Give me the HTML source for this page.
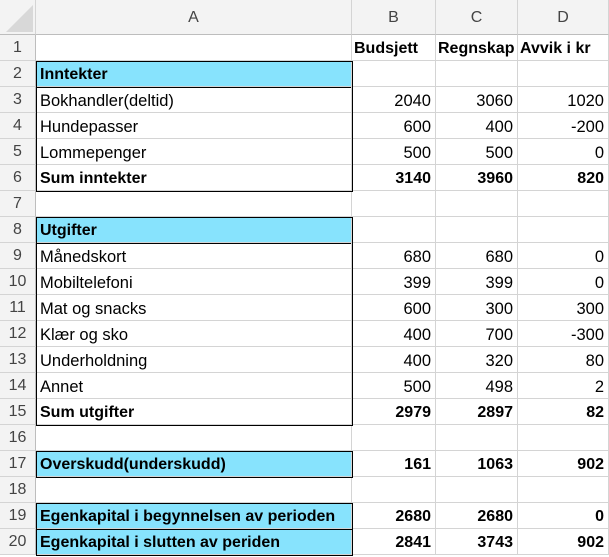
<!DOCTYPE html>
<html><head><meta charset="utf-8"><style>
*{box-sizing:border-box;margin:0;padding:0}
body{width:609px;height:557px;overflow:hidden;background:#fff;font-family:"Liberation Sans",Arial,sans-serif;font-size:16.5px;color:#000;position:relative}
.r{position:absolute;left:0;height:26px;display:flex;width:620px;z-index:1}
.r div{border-right:1px solid #d4d4d4;border-bottom:1px solid #d4d4d4;height:26px;line-height:28px;white-space:nowrap;overflow:hidden}
.r div.h{width:36px;background:#f3f3f3;text-align:center;color:#444;font-size:16px;line-height:26px;border-right:1px solid #bdbdbd}
.a{width:316px;padding-left:4px}
.b{width:84px;text-align:right;padding-right:4px}
.c{width:82px;text-align:right;padding-right:4px}
.d{width:91px;text-align:right;padding-right:4px}
.r div.bo{font-weight:bold;font-size:16px;line-height:28px}
.hd{position:absolute;top:0;left:0;height:35px;display:flex;width:620px;background:#f3f3f3}
.hd div{height:35px;line-height:35px;text-align:center;color:#444;font-size:16px;border-right:1px solid #d4d4d4;border-bottom:1px solid #bdbdbd}
.box{position:absolute;left:36px;width:317px;border:1px solid #000;z-index:2}
.blue{background:#87e3fd;z-index:0}
</style></head><body>
<div class="hd"><div style="width:36px;position:relative"><svg width="36" height="35" style="position:absolute;left:0;top:0"><polygon points="33,5 33,32 6,32" fill="#d8d8d8"/></svg></div><div style="width:316px">A</div><div style="width:84px">B</div><div style="width:82px">C</div><div style="width:91px">D</div></div>

<div class="r" style="top:35px"><div class="h">1</div><div class="a"></div><div class="b bo" style="text-align:left;padding-left:2px">Budsjett</div><div class="c bo" style="text-align:left;padding-left:2px">Regnskap</div><div class="d bo" style="text-align:left;padding-left:2px">Avvik i kr</div></div>
<div class="box blue" style="top:61px;height:27px"></div>
<div class="r" style="top:61px"><div class="h">2</div><div class="a bo">Inntekter</div><div class="b"></div><div class="c"></div><div class="d"></div></div>
<div class="r" style="top:87px"><div class="h">3</div><div class="a">Bokhandler(deltid)</div><div class="b">2040</div><div class="c">3060</div><div class="d">1020</div></div>
<div class="r" style="top:113px"><div class="h">4</div><div class="a">Hundepasser</div><div class="b">600</div><div class="c">400</div><div class="d">-200</div></div>
<div class="r" style="top:139px"><div class="h">5</div><div class="a">Lommepenger</div><div class="b">500</div><div class="c">500</div><div class="d">0</div></div>
<div class="r" style="top:165px"><div class="h">6</div><div class="a bo">Sum inntekter</div><div class="b bo">3140</div><div class="c bo">3960</div><div class="d bo">820</div></div>
<div class="r" style="top:191px"><div class="h">7</div><div class="a"></div><div class="b"></div><div class="c"></div><div class="d"></div></div>
<div class="box blue" style="top:217px;height:27px"></div>
<div class="r" style="top:217px"><div class="h">8</div><div class="a bo">Utgifter</div><div class="b"></div><div class="c"></div><div class="d"></div></div>
<div class="r" style="top:243px"><div class="h">9</div><div class="a">Månedskort</div><div class="b">680</div><div class="c">680</div><div class="d">0</div></div>
<div class="r" style="top:269px"><div class="h">10</div><div class="a">Mobiltelefoni</div><div class="b">399</div><div class="c">399</div><div class="d">0</div></div>
<div class="r" style="top:295px"><div class="h">11</div><div class="a">Mat og snacks</div><div class="b">600</div><div class="c">300</div><div class="d">300</div></div>
<div class="r" style="top:321px"><div class="h">12</div><div class="a">Klær og sko</div><div class="b">400</div><div class="c">700</div><div class="d">-300</div></div>
<div class="r" style="top:347px"><div class="h">13</div><div class="a">Underholdning</div><div class="b">400</div><div class="c">320</div><div class="d">80</div></div>
<div class="r" style="top:373px"><div class="h">14</div><div class="a">Annet</div><div class="b">500</div><div class="c">498</div><div class="d">2</div></div>
<div class="r" style="top:399px"><div class="h">15</div><div class="a bo">Sum utgifter</div><div class="b bo">2979</div><div class="c bo">2897</div><div class="d bo">82</div></div>
<div class="r" style="top:425px"><div class="h">16</div><div class="a"></div><div class="b"></div><div class="c"></div><div class="d"></div></div>
<div class="box blue" style="top:451px;height:27px"></div>
<div class="r" style="top:451px"><div class="h">17</div><div class="a bo">Overskudd(underskudd)</div><div class="b bo">161</div><div class="c bo">1063</div><div class="d bo">902</div></div>
<div class="r" style="top:477px"><div class="h">18</div><div class="a"></div><div class="b"></div><div class="c"></div><div class="d"></div></div>
<div class="box blue" style="top:503px;height:27px"></div>
<div class="box blue" style="top:529px;height:27px"></div>
<div class="r" style="top:503px"><div class="h">19</div><div class="a bo">Egenkapital i begynnelsen av perioden</div><div class="b bo">2680</div><div class="c bo">2680</div><div class="d bo">0</div></div>
<div class="r" style="top:529px"><div class="h">20</div><div class="a bo">Egenkapital i slutten av periden</div><div class="b bo">2841</div><div class="c bo">3743</div><div class="d bo">902</div></div>

<div class="box" style="top:61px;height:131px"></div>
<div class="box" style="top:217px;height:209px"></div>
<div class="box" style="top:451px;height:27px"></div>
<div class="box" style="top:503px;height:27px"></div>
<div class="box" style="top:529px;height:27px"></div>
</body></html>
